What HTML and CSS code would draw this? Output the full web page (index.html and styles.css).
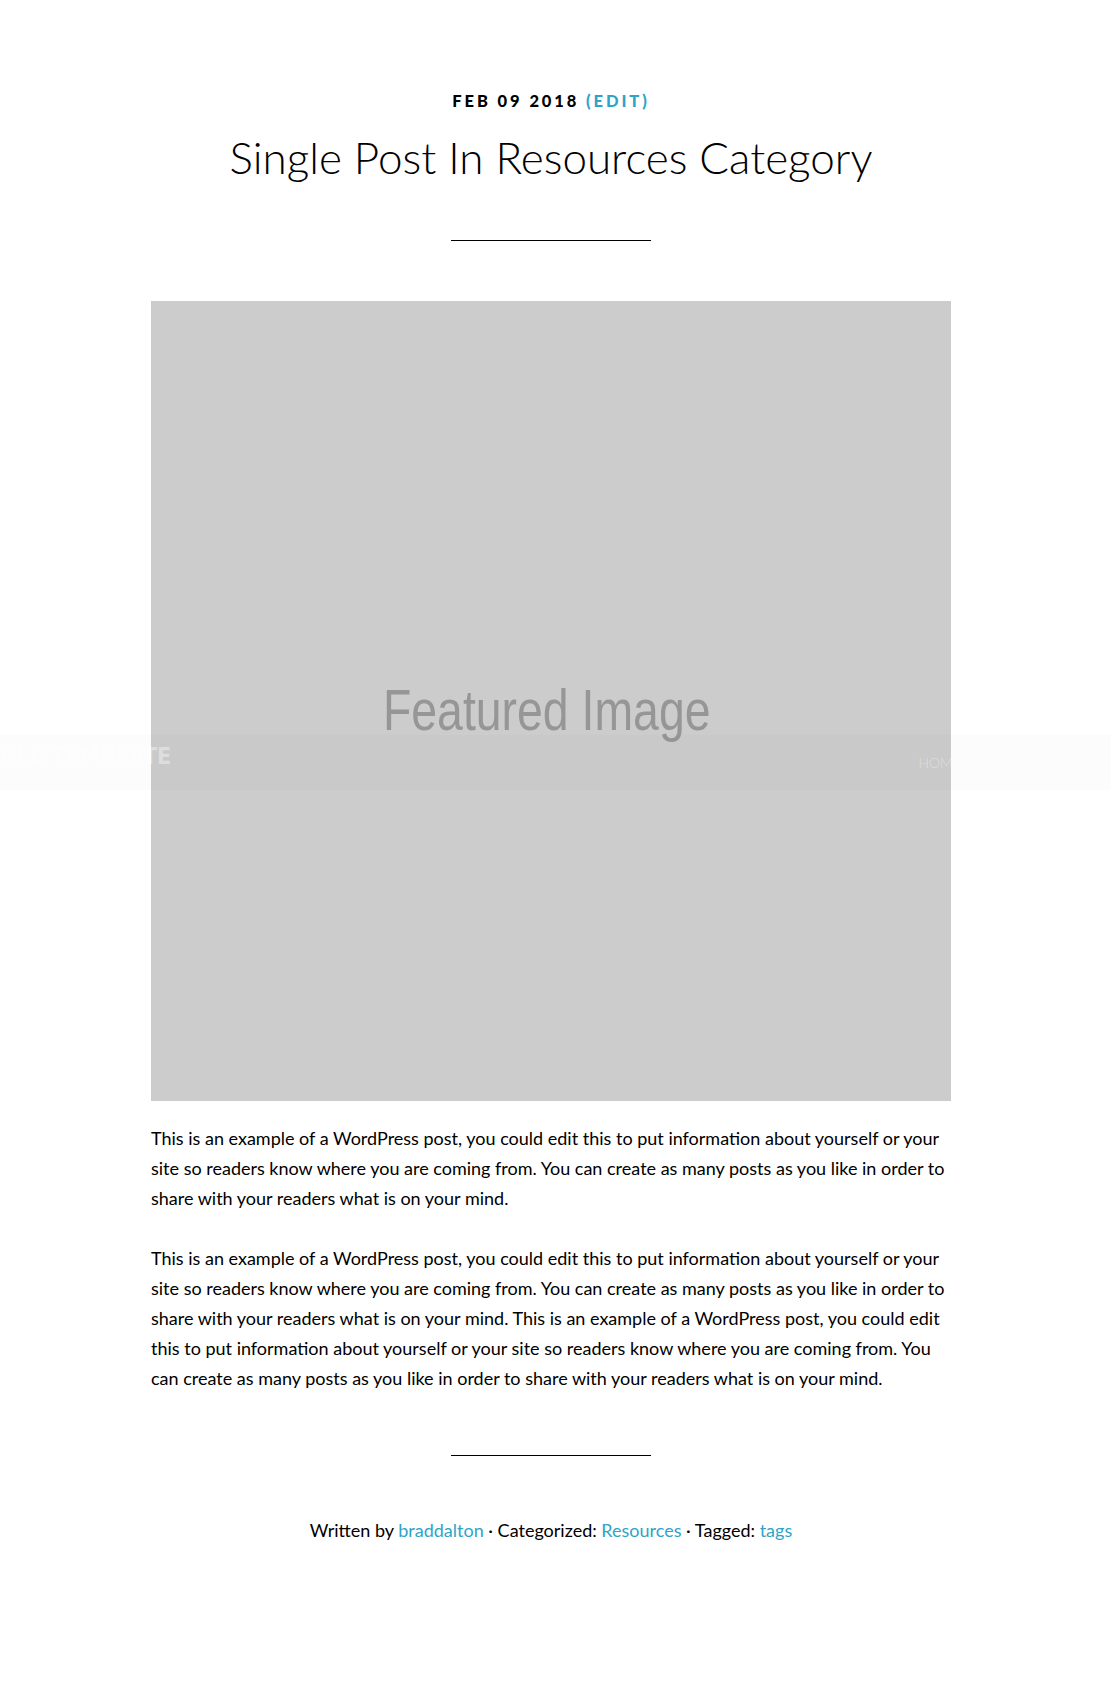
FILE: index.html
```html
<!DOCTYPE html>
<html lang="en">
<head>
<meta charset="utf-8">
<title>Single Post In Resources Category</title>
<link rel="stylesheet" href="styles.css">
</head>
<body>
<div class="site">
  <article class="entry">
    <header class="entry-header">
      <p class="entry-meta"><time class="entry-time">Feb 09 2018</time> <span class="edit-link">(<a href="#">Edit</a>)</span></p>
      <h1 class="entry-title">Single Post In Resources Category</h1>
    </header>
    <hr class="rule rule-top">
    <div class="featured"><span class="featured-label">Featured Image</span></div>
    <div class="entry-content">
      <p>This is an example of a WordPress post, you could edit this to put information about yourself or your site so readers know where you are coming from. You can create as many posts as you like in order to share with your readers what is on your mind.</p>
      <p>This is an example of a WordPress post, you could edit this to put information about yourself or your site so readers know where you are coming from. You can create as many posts as you like in order to share with your readers what is on your mind. This is an example of a WordPress post, you could edit this to put information about yourself or your site so readers know where you are coming from. You can create as many posts as you like in order to share with your readers what is on your mind.</p>
    </div>
    <hr class="rule rule-bottom">
    <footer class="entry-footer">Written by <a href="#">braddalton</a> &middot; Categorized: <a href="#">Resources</a> &middot; Tagged: <a href="#">tags</a></footer>
  </article>
</div>
<div class="ghost-header">
  <div class="ghost-brand">
    <span class="ghost-title">GLE TEMPLATE</span>
    <span class="ghost-desc">just another genesis theme</span>
  </div>
  <nav class="ghost-nav"><span>Home</span><span>Blog</span><span>Resou</span></nav>
</div>
</body>
</html>
```
FILE: styles.css
```css
html, body {
  margin: 0;
  padding: 0;
  background: #fff;
}
body {
  font-family: Lato, "Open Sans", sans-serif;
  color: #000;
  overflow-x: hidden;
  position: relative;
  min-height: 1688px;
}
.site {
  padding-right: 9px;
}
.entry {
  width: 800px;
  margin: 0 auto;
  padding-top: 91px;
}
.entry-header {
  text-align: center;
}
.entry-meta {
  margin: 0;
  font-size: 16.5px;
  line-height: 20px;
  font-weight: 900;
  letter-spacing: 2.9px;
  text-transform: uppercase;
}
.edit-link, .edit-link a {
  color: #2fa4c8;
  text-decoration: none;
}
.entry-title {
  margin: 20px 0 0;
  font-size: 44px;
  line-height: 52px;
  font-weight: 300;
  letter-spacing: 0;
}
.rule {
  width: 200px;
  height: 1px;
  border: 0;
  background: #000;
  margin: 0 auto;
}
.rule-top {
  margin-top: 57px;
  margin-bottom: 60px;
}
.featured {
  width: 800px;
  height: 800px;
  background: #cccccc;
  display: flex;
  align-items: center;
  justify-content: center;
}
.featured-label {
  font-family: "Liberation Sans", Arial, sans-serif;
  font-size: 58px;
  color: #969696;
  transform: scaleX(0.8);
  white-space: nowrap;
  margin-top: 16px;
  margin-right: 8px;
}
.entry-content {
  margin-top: 22px;
  font-size: 18px;
  line-height: 30px;
}
.entry-content p {
  margin: 0 0 30px;
}
.entry-content p:last-child {
  margin-bottom: 0;
}
.rule-bottom {
  margin-top: 62px;
}
.entry-footer {
  margin-top: 59px;
  text-align: center;
  font-size: 18px;
  line-height: 30px;
}
.entry-footer a {
  color: #2fa4c8;
  text-decoration: none;
}
.ghost-header {
  position: absolute;
  top: 735px;
  left: 0;
  right: 0;
  height: 55px;
  background: rgba(0, 0, 0, 0.012);
  display: flex;
  justify-content: space-between;
  align-items: center;
  color: rgba(255, 255, 255, 0.4);
  overflow: hidden;
}
.ghost-brand {
  display: flex;
  flex-direction: column;
}
.ghost-title {
  font-family: "DejaVu Sans Condensed", "Liberation Sans", sans-serif;
  font-weight: 700;
  font-size: 23px;
  line-height: 24px;
}
.ghost-desc {
  font-size: 11px;
  line-height: 14px;
  font-style: italic;
}
.ghost-nav {
  display: flex;
  gap: 34px;
  font-size: 14px;
  font-weight: 300;
  text-transform: uppercase;
}
```
